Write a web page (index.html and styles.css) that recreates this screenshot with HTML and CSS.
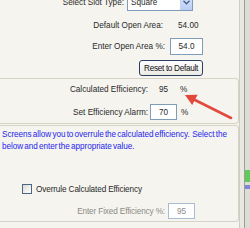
FILE: index.html
```html
<!DOCTYPE html>
<html lang="en">
<head>
    <meta charset="UTF-8">
    <title>Efficiency</title>
    <link rel="stylesheet" href="styles.css">
</head>
<body>
    <div class="window">
        <div class="main">
            <div class="top">
                <div class="row row-slot">
                    <span class="label">Select Slot Type:</span>
                    <div class="select">
                        <span class="select-text">Square</span>
                        <span class="select-btn">
                            <svg width="7" height="5" viewBox="0 0 7 5"><path d="M0.5 0.8 L3.5 3.8 L6.5 0.8" fill="none" stroke="#4d6185" stroke-width="1.4"/></svg>
                        </span>
                    </div>
                </div>
                <div class="row row-default">
                    <span class="label">Default Open Area:</span>
                    <span class="value">54.00</span>
                </div>
                <div class="row row-enter">
                    <span class="label">Enter Open Area %:</span>
                    <span class="field">54.0</span>
                </div>
                <div class="row row-reset">
                    <button class="btn" type="button">Reset to Default</button>
                </div>
            </div>

            <div class="group group-eff">
                <div class="row row-calc">
                    <span class="label">Calculated Efficiency:</span>
                    <span class="num">95</span>
                    <span class="pct">%</span>
                </div>
                <div class="row row-alarm">
                    <span class="label">Set Efficiency Alarm:</span>
                    <span class="field field-sm">70</span>
                    <span class="pct">%</span>
                </div>
            </div>

            <div class="group group-over">
                <p class="note">Screens allow you to overrule the calculated efficiency.&nbsp; Select the<br>below and enter the appropriate value.</p>
                <div class="check-row">
                    <span class="check"></span>
                    <span class="check-text">Overrule Calculated Efficiency</span>
                </div>
                <div class="row row-fixed">
                    <span class="label muted">Enter Fixed Efficiency %:</span>
                    <span class="field field-sm disabled">95</span>
                </div>
            </div>
        </div>
        <div class="edge">
            <div class="edge-bar">
                <span class="mark-green"></span>
                <span class="mark-blue"></span>
            </div>
        </div>

        <svg class="arrow" width="250" height="228" viewBox="0 0 250 228">
            <line x1="231" y1="118" x2="193" y2="99" stroke="#e2483c" stroke-width="2.6" stroke-linecap="round"/>
            <polygon points="185,95 192.2,105 197.6,94.8" fill="#e2483c"/>
        </svg>
    </div>
</body>
</html>
```

FILE: styles.css
```css
body {
    margin: 0;
    width: 250px;
    height: 228px;
    overflow: hidden;
    background-color: #f5f4ef;
    font-family: "Liberation Sans", Arial, sans-serif;
    font-size: 8.2px;
    color: #2a2a2a;
}
.window {
    position: relative;
    display: flex;
    height: 228px;
}
.main {
    width: 239px;
}
.top {
    margin-top: -6px;
}
.row {
    display: flex;
    align-items: center;
}
.label {
    text-align: right;
    white-space: nowrap;
}
.row-slot {
    height: 17px;
}
.row-slot .label {
    width: 124px;
}
.select {
    display: flex;
    width: 66px;
    height: 17px;
    margin-left: 3px;
    box-sizing: border-box;
    border: 1px solid #7f9db9;
    background: #fff;
}
.select-text {
    flex: 1;
    padding-left: 3px;
    line-height: 15px;
}
.select-btn {
    display: flex;
    align-items: center;
    justify-content: center;
    width: 11px;
    background: linear-gradient(#d9e5fb, #b9cdf5);
    border-left: 1px solid #c3d3f0;
}
.row-default {
    height: 14px;
    margin-top: 7px;
}
.row-default .label {
    width: 163px;
}
.value {
    margin-left: 15px;
}
.row-enter {
    height: 17px;
    margin-top: 6px;
}
.row-enter .label {
    width: 165px;
}
.field {
    display: flex;
    align-items: center;
    justify-content: center;
    width: 33px;
    height: 17px;
    margin-left: 5px;
    box-sizing: border-box;
    border: 1px solid #7f9db9;
    background: #fff;
}
.field-sm {
    width: 27px;
    height: 16px;
}
.row-reset {
    height: 16px;
    margin-top: 5px;
}
.btn {
    width: 64px;
    height: 16px;
    margin-left: 139px;
    padding: 0;
    border: 1px solid #2c3e5e;
    border-radius: 3px;
    background: linear-gradient(#ffffff, #ebeae4);
    font-family: inherit;
    font-size: 8.2px;
    letter-spacing: -0.3px;
    color: #111;
}
.group {
    width: 239px;
    box-sizing: border-box;
    border: 1px solid #d6d3c7;
    border-left: none;
    border-radius: 0 4px 4px 0;
}
.group-eff {
    margin-top: 2px;
    padding: 3px 0;
}
.row-calc {
    height: 14px;
}
.row-calc .label,
.row-alarm .label {
    width: 148px;
}
.num {
    width: 20px;
    text-align: right;
}
.row-calc .pct {
    margin-left: 12px;
}
.row-alarm {
    margin-top: 8px;
}
.row-alarm .field {
    margin-left: 2px;
}
.row-alarm .pct {
    margin-left: 4px;
}
.group-over {
    margin-top: 1px;
    padding: 3px 0 2px;
}
.note {
    margin: 0;
    padding-left: 2px;
    line-height: 12px;
    white-space: nowrap;
    word-spacing: -1px;
    letter-spacing: -0.06px;
    color: #2626ee;
}
.check-row {
    display: flex;
    align-items: center;
    height: 12px;
    margin-top: 30px;
    padding-left: 22px;
}
.check {
    width: 10px;
    height: 10px;
    margin-right: 4px;
    box-sizing: border-box;
    border: 1px solid #4b6788;
    background: linear-gradient(135deg, #dcdcd4, #ffffff);
}
.check-text {
    white-space: nowrap;
    letter-spacing: -0.12px;
}
.row-fixed {
    margin-top: 8px;
}
.row-fixed .label {
    width: 165px;
    letter-spacing: -0.12px;
}
.row-fixed .field {
    margin-left: 3px;
}
.muted {
    color: #8c8c86;
}
.disabled {
    border-color: #a9bcd2;
    color: #8c8c86;
}
.edge {
    flex: 1;
    display: flex;
    border-left: 1px solid #cfcdc2;
    background: #e9e8e1;
}
.edge-bar {
    display: flex;
    flex-direction: column;
    width: 6px;
    margin-left: 4px;
    border-left: 1px solid #9f9d94;
    background: #dddcd6;
}
.mark-green {
    height: 12px;
    margin-top: 170px;
    background: #5fc95a;
}
.mark-blue {
    height: 4px;
    margin-top: 3px;
    background: #7d86d6;
}
.arrow {
    position: absolute;
    left: 0;
    top: 0;
    pointer-events: none;
}
```
